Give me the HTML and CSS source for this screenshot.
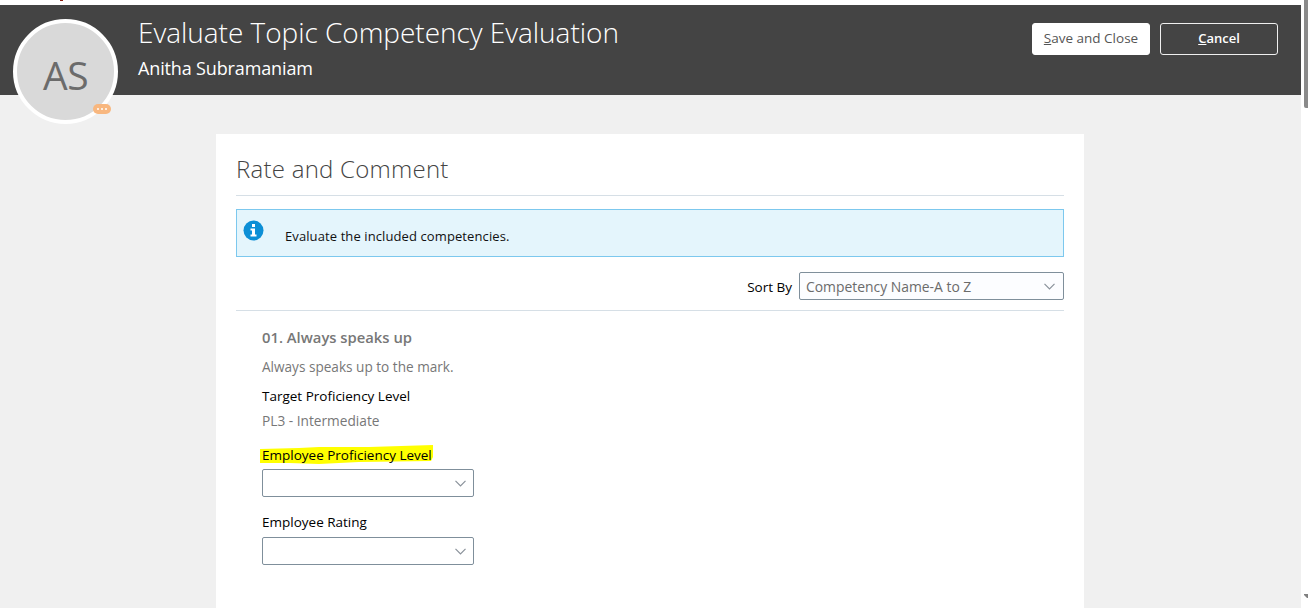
FILE: index.html
```html
<!DOCTYPE html>
<html lang="en">
<head>
<meta charset="utf-8">
<title>Evaluate Topic Competency Evaluation</title>
<link rel="stylesheet" href="styles.css">
</head>
<body>
<div class="viewport">
  <div class="page">
    <div class="top-strip"><span class="top-mark"></span></div>
    <header class="header">
      <div class="titles">
        <h1 class="title">Evaluate Topic Competency Evaluation</h1>
        <div class="subtitle">Anitha Subramaniam</div>
      </div>
      <div class="actions">
        <button class="btn btn-save"><span class="ul">S</span>ave and Close</button>
        <button class="btn btn-cancel"><span class="ul">C</span>ancel</button>
      </div>
    </header>
    <div class="avatar">
      <span class="initials">AS</span>
      <span class="badge"><i></i><i></i><i></i></span>
    </div>
    <main class="main">
      <section class="card">
        <h2 class="card-title">Rate and Comment</h2>
        <div class="info">
          <svg class="info-icon" width="21" height="21" viewBox="0 0 21 21">
            <circle cx="10.5" cy="10.5" r="10" fill="#0c8fd6"/>
            <rect x="9" y="4" width="3" height="3" fill="#fff"/>
            <path d="M7.5 8.5H12V14.5H13.5V16.5H7.5V14.5H9V10.5H7.5Z" fill="#fff"/>
          </svg>
          <span class="info-text">Evaluate the included competencies.</span>
        </div>
        <div class="sort-row">
          <span class="label">Sort By</span>
          <div class="select select-sort">
            <span class="select-value">Competency Name-A to Z</span>
            <svg class="chev" width="11" height="7" viewBox="0 0 11 7"><path d="M0.5 0.8L5.5 5.8L10.5 0.8" fill="none" stroke="#8a929a" stroke-width="1.2"/></svg>
          </div>
        </div>
        <div class="competency">
          <h3 class="comp-name">01. Always speaks up</h3>
          <p class="comp-desc">Always speaks up to the mark.</p>
          <div class="label target-label">Target Proficiency Level</div>
          <div class="target-value">PL3 - Intermediate</div>
          <div class="label highlighted">
            <svg class="marker" width="176" height="20" viewBox="0 0 176 20"><path d="M1 4L40 3L60 2L110 2L174 0L174 12L172 16L100 17L60 19L30 18L1 18Z" fill="#ffff00"/></svg>
            <span class="label-text">Employee Proficiency Level</span>
          </div>
          <div class="select select-small">
            <svg class="chev" width="11" height="7" viewBox="0 0 11 7"><path d="M0.5 0.8L5.5 5.8L10.5 0.8" fill="none" stroke="#8a929a" stroke-width="1.2"/></svg>
          </div>
          <div class="label rating-label">Employee Rating</div>
          <div class="select select-small">
            <svg class="chev" width="11" height="7" viewBox="0 0 11 7"><path d="M0.5 0.8L5.5 5.8L10.5 0.8" fill="none" stroke="#8a929a" stroke-width="1.2"/></svg>
          </div>
        </div>
      </section>
    </main>
  </div>
  <div class="scrollbar">
    <div class="thumb"></div>
    <svg class="scroll-arrow" width="4" height="4" viewBox="0 0 4 4"><path d="M0 0H4V4H3L0 1Z" fill="#808080"/></svg>
  </div>
</div>
</body>
</html>
```
FILE: styles.css
```css
* { box-sizing: border-box; }
html, body { margin: 0; padding: 0; height: 100%; overflow: hidden; }
body { font-family: "Open Sans", "Noto Sans", sans-serif; background: #fff; color: #000; }
.viewport { display: flex; width: 1308px; height: 608px; overflow: hidden; }
.page { position: relative; width: 1301px; height: 608px; background: #f0f0f0; overflow: hidden; flex: none; }
.top-strip { height: 5px; background: #fff; position: relative; }
.top-mark { position: absolute; left: 60px; top: 0; width: 3px; height: 1px; background: #8a1c10; }
.header { height: 90px; background: #444; display: flex; justify-content: space-between; padding: 0 23px 0 138px; }
.titles { padding-top: 8px; color: #fff; }
.title { margin: 0; font-size: 28px; line-height: 38px; font-weight: 300; letter-spacing: -0.04px; }
.subtitle { font-size: 18px; line-height: 24px; margin-top: 5px; font-weight: 400; letter-spacing: -0.14px; }
.actions { display: flex; gap: 10px; padding-top: 18px; align-items: flex-start; }
.btn { height: 32px; width: 118px; border-radius: 3px; font-family: inherit; font-size: 13.5px; padding: 0 0 2px; }
.btn-save { background: #fff; border: 1px solid #fff; color: #555; font-weight: 400; }
.btn-cancel { background: #444; border: 1px solid #f0f0f0; color: #fff; font-weight: 600; font-size: 13px; }
.ul { text-decoration: underline; }
.avatar { position: absolute; left: 13px; top: 19px; width: 105px; height: 105px; border-radius: 50%; background: #d9d9d9; border: 4px solid #fff; display: flex; align-items: center; justify-content: center; padding-top: 5px; }
.initials { font-size: 39px; font-weight: 400; color: #6b6b6b; letter-spacing: -0.5px; }
.badge { position: absolute; left: 76px; top: 81px; width: 18px; height: 10px; border-radius: 5px; background: #f8b77f; display: flex; align-items: center; justify-content: center; gap: 2px; }
.badge i { width: 2px; height: 2px; background: #fff; border-radius: 50%; }
.main { display: flex; justify-content: center; padding: 39px 1px 0 0; }
.card { width: 868px; height: 600px; background: #fff; padding: 0 20px; flex: none; }
.card-title { margin: 0; height: 62px; padding-top: 15px; font-size: 24px; line-height: 40px; font-weight: 300; color: #444; border-bottom: 1px solid #d6dfe6; letter-spacing: 0.25px; }
.info { margin-top: 13px; height: 48px; background: #e4f5fc; border: 1px solid #7cc8ee; display: flex; padding: 10px 0 0 6px; }
.info-icon { flex: none; }
.info-text { font-size: 13px; line-height: 30px; margin-left: 21px; color: #111; letter-spacing: 0.1px; padding-top: 1px; }
.sort-row { margin-top: 15px; height: 39px; padding-bottom: 10px; display: flex; justify-content: flex-end; align-items: center; gap: 7px; border-bottom: 1px solid #d6dfe6; }
.sort-row .label { padding-top: 2px; }
.label { font-size: 13.5px; line-height: 18px; font-weight: 500; color: #000; }
.select { background: #fff; border: 1px solid #7f8f9b; border-radius: 2px; display: flex; align-items: center; justify-content: flex-end; position: relative; }
.select-sort { width: 265px; height: 28px; background: #fcfdff; justify-content: space-between; padding: 0 8px 0 6px; }
.select-value { font-size: 13.9px; font-weight: 500; color: #6b6b6b; }
.select-small { width: 212px; height: 28px; padding-right: 7px; }
.competency { padding: 16px 0 0 26px; }
.comp-name { margin: 0; font-size: 14.8px; line-height: 20px; font-weight: 600; color: #777; }
.comp-desc { margin: 11px 0 0; font-size: 13.6px; line-height: 18px; font-weight: 500; color: #777; }
.target-label { margin-top: 11px; }
.target-value { margin-top: 7px; font-size: 13.7px; line-height: 18px; font-weight: 500; color: #777; }
.highlighted { margin-top: 16px; position: relative; line-height: 18px; }
.marker { position: absolute; left: -3px; top: -1px; }
.label-text { position: relative; }
.highlighted + .select { margin-top: 5px; }
.rating-label { margin-top: 16px; }
.rating-label + .select { margin-top: 6px; }
.scrollbar { width: 7px; height: 608px; background: #fff; position: relative; flex: none; }
.thumb { position: absolute; right: 0; top: 0; width: 4px; height: 108px; background: #8a8a8a; border-bottom-left-radius: 2px; }
.scroll-arrow { position: absolute; right: 0; top: 594px; }
```
